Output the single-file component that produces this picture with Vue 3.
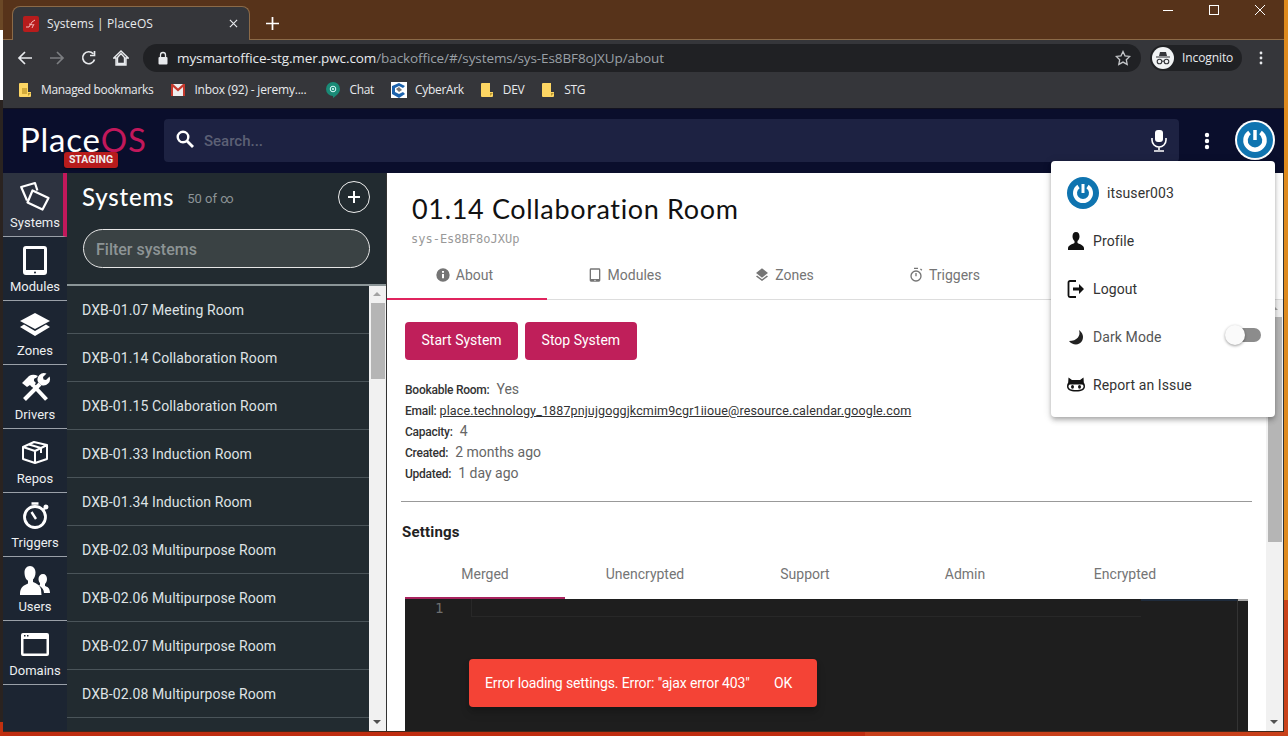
<script setup>
const bookmarks = [
  { label: 'Managed bookmarks', kind: 'managed' },
  { label: 'Inbox (92) - jeremy....', kind: 'gmail' },
  { label: 'Chat', kind: 'chat' },
  { label: 'CyberArk', kind: 'cyber' },
  { label: 'DEV', kind: 'folder' },
  { label: 'STG', kind: 'folder' }
]

const nav = [
  { label: 'Systems', active: true, paths: [
    { d: 'M8 20.500 2.200 7 16 3l2.400 7.500', fill: 'none', stroke: '#fff', 'stroke-width': 2.200, 'stroke-linejoin': 'round' },
    { d: 'M13.500 10.500 29.500 18l-6 11.500L8.500 22.500z', fill: 'none', stroke: '#fff', 'stroke-width': 2.200, 'stroke-linejoin': 'round' }
  ] },
  { label: 'Modules', paths: [
    { d: 'M7 2h18a3 3 0 0 1 3 3v23a3 3 0 0 1-3 3H7a3 3 0 0 1-3-3V5a3 3 0 0 1 3-3zM7 5v21h18V5zM16 27.500a1 1 0 1 0 0 2 1 1 0 0 0 0-2z', fill: '#fff', 'fill-rule': 'evenodd' }
  ] },
  { label: 'Zones', paths: [
    { d: 'M16 5l15 8-15 8-15-8z', fill: '#fff' },
    { d: 'M5 16.500 16 23l11-6.500 4 2.500-15 9-15-9z', fill: '#fff' }
  ] },
  { label: 'Drivers', paths: [
    { d: 'M27.500 27.500 13 12', fill: 'none', stroke: '#fff', 'stroke-width': 4 },
    { d: 'M3 11l7-7q4-2.500 9 0l-2 2q-2.500 0-2 3l2 2-4 4-2-2-3 2z', fill: '#fff' },
    { d: 'M5.500 27.500 21 12', fill: 'none', stroke: '#fff', 'stroke-width': 4 },
    { d: 'M30.500 4.500 27 8l-2.500-.5L24 5l3.500-3.500A6.500 6.500 0 0 0 19 10l3 3a6.500 6.500 0 0 0 8.500-8.500z', fill: '#fff' }
  ] },
  { label: 'Repos', paths: [
    { d: 'M4 11l11-5 13 3v14l-12 4-12-4zM4 11l12 4 12-6M16 15v12', fill: 'none', stroke: '#fff', 'stroke-width': 2, 'stroke-linejoin': 'round' },
    { d: 'M10 8.500 22 12v5', fill: 'none', stroke: '#fff', 'stroke-width': 2 }
  ] },
  { label: 'Triggers', paths: [
    { d: 'M16 6.500a10.500 10.500 0 1 0 0 21 10.500 10.500 0 0 0 0-21z', fill: 'none', stroke: '#fff', 'stroke-width': 2.800 },
    { d: 'M12.500 3.500h7M12.500 12l4.500 7', fill: 'none', stroke: '#fff', 'stroke-width': 2.400 },
    { d: 'M24 10l3-3', fill: 'none', stroke: '#fff', 'stroke-width': 2 },
    { d: 'M27 4.500a2.500 2.500 0 1 0 0 5 2.500 2.500 0 0 0 0-5z', fill: '#fff' }
  ] },
  { label: 'Users', paths: [
    { d: 'M11 2c3.500 0 5.500 3 5.500 6.500 0 3-1 5.500-2.500 7v2.500c3 1.500 7 2.500 8 7.500l.5 5.500H1c0-5 1-8 5-10l3-1.500v-3C7 16 5.500 12 5.500 8.500 5.500 5 7.500 2 11 2z', fill: '#fff' },
    { d: 'M24 10c2.500 0 4 2 4 5 0 2-1 4-2 5v2c2 .8 5 1.500 5 7h-6c0-3-2-6-5-7.500 1-.5 1-1 1-1.500v-1c-1-1-1.500-2.500-1.500-4 0-3 2-5 4.500-5z', fill: '#fff' }
  ] },
  { label: 'Domains', paths: [
    { d: 'M4 5h24a2 2 0 0 1 2 2v19a2 2 0 0 1-2 2H4a2 2 0 0 1-2-2V7a2 2 0 0 1 2-2zM4.500 11v14.500h23V11zM5 7h1.500v1.500H5zM8 7h1.500v1.500H8z', fill: '#fff', 'fill-rule': 'evenodd' }
  ] }
]

const systems = [
  'DXB-01.07 Meeting Room',
  'DXB-01.14 Collaboration Room',
  'DXB-01.15 Collaboration Room',
  'DXB-01.33 Induction Room',
  'DXB-01.34 Induction Room',
  'DXB-02.03 Multipurpose Room',
  'DXB-02.06 Multipurpose Room',
  'DXB-02.07 Multipurpose Room',
  'DXB-02.08 Multipurpose Room'
]

const tabs = [
  { label: 'About', active: true, d: 'M12 2a10 10 0 1 0 0 20 10 10 0 0 0 0-20zm1.500 15h-3v-6.500h3zm0-8.500h-3V6h3z' },
  { label: 'Modules', d: 'M6 2h12a2 2 0 0 1 2 2v16a2 2 0 0 1-2 2H6a2 2 0 0 1-2-2V4a2 2 0 0 1 2-2zm0 2v14h12V4zm6 15a1 1 0 1 0 0 2 1 1 0 0 0 0-2z' },
  { label: 'Zones', d: 'M11.990 18.540l-7.370-5.730L3 14.070l9 7 9-7-1.630-1.270-7.380 5.740zM12 16l7.360-5.730L21 9l-9-7-9 7 1.630 1.270L12 16z' },
  { label: 'Triggers', d: 'M9 1h6v2H9zM12 5a8.500 8.500 0 1 0 0 17 8.500 8.500 0 0 0 0-17zm0 2a6.500 6.500 0 1 1 0 13 6.500 6.500 0 0 1 0-13zm-1 2h2v5h-2zM18 3.500l1.400-1.400 2 2L20 5.500z' }
]

const details = [
  { k: 'Bookable Room:', v: 'Yes' },
  { k: 'Email:', v: 'place.technology_1887pnjujgoggjkcmim9cgr1iioue@resource.calendar.google.com', link: true },
  { k: 'Capacity:', v: '4' },
  { k: 'Created:', v: '2 months ago' },
  { k: 'Updated:', v: '1 day ago' }
]

const settingTabs = ['Merged', 'Unencrypted', 'Support', 'Admin', 'Encrypted']
</script>

<template>
  <div class="desktop">
    <div class="window">
      <div class="titlebar">
        <div class="tab">
          <svg class="favicon" viewBox="0 0 16 16">
            <rect width="16" height="16" rx="2" fill="#b71c1c" />
            <path d="M3 11h3l3-5 3-2M6 8l4 1M9 12l2-4" fill="none" stroke="#f4b8b8" stroke-width="1" />
          </svg>
          <span class="tab-title">Systems | PlaceOS</span>
          <svg class="tab-close" viewBox="0 0 10 10"><path d="M1 1l8 8M9 1l-8 8" stroke="#e8eaed" stroke-width="1.300" /></svg>
        </div>
        <svg class="new-tab" viewBox="0 0 12 12"><path d="M6 0v12M0 6h12" stroke="#fff" stroke-width="1.600" /></svg>
        <div class="win-controls">
          <svg viewBox="0 0 10 10"><path d="M0 5.500h10" stroke="#fff" /></svg>
          <svg viewBox="0 0 10 10"><rect x=".5" y=".5" width="9" height="9" fill="none" stroke="#fff" /></svg>
          <svg viewBox="0 0 10 10"><path d="M0 0l10 10M10 0L0 10" stroke="#fff" /></svg>
        </div>
      </div>

      <div class="toolbar">
        <button class="tool"><svg viewBox="0 0 16 16"><path d="M15 8H2M8 2L2 8l6 6" fill="none" stroke="#e8eaed" stroke-width="1.700" /></svg></button>
        <button class="tool"><svg viewBox="0 0 16 16"><path d="M1 8h13M8 2l6 6-6 6" fill="none" stroke="#7c7e81" stroke-width="1.700" /></svg></button>
        <button class="tool"><svg viewBox="0 0 16 16"><path d="M13.500 9.500A6 6 0 1 1 12.200 3.700M13.500 1v4.500H9" fill="none" stroke="#e8eaed" stroke-width="1.700" /></svg></button>
        <button class="tool"><svg viewBox="0 0 16 16"><path d="M8 1L.8 8H3v7h10V8h2.200zM4.500 7.500 8 3.500l3.500 4v6h-7z" fill="none" stroke="#e8eaed" stroke-width="1.400" /></svg></button>
        <div class="omnibox">
          <svg class="lock" viewBox="0 0 12 14"><path d="M3.500 6V4a2.500 2.500 0 0 1 5 0v2" fill="none" stroke="#e8eaed" stroke-width="1.300" /><rect x="1.500" y="6" width="9" height="7.500" rx="1" fill="#e8eaed" /></svg>
          <span class="url"><span class="host">mysmartoffice-stg.mer.pwc.com</span>/backoffice/#/systems/sys-Es8BF8oJXUp/about</span>
          <svg class="star" viewBox="0 0 16 16"><path d="M8 1.500l2 4.300 4.700.6-3.400 3.300.9 4.700L8 12.100l-4.200 2.300.9-4.700L1.300 6.400 6 5.800z" fill="none" stroke="#c4c6c9" stroke-width="1.300" /></svg>
        </div>
        <div class="incognito">
          <svg class="incog-icon" viewBox="0 0 22 22">
            <circle cx="11" cy="11" r="11" fill="#f1f3f4" />
            <path d="M8 5h6l1 4H7zM4 9.500h14v1H4z" fill="#35363a" />
            <circle cx="7.500" cy="14.500" r="2.300" fill="none" stroke="#35363a" stroke-width="1.100" />
            <circle cx="14.500" cy="14.500" r="2.300" fill="none" stroke="#35363a" stroke-width="1.100" />
            <path d="M9.800 14.200h2.400" stroke="#35363a" />
          </svg>
          <span>Incognito</span>
        </div>
        <svg class="chrome-dots" viewBox="0 0 4 14"><circle cx="2" cy="2" r="1.400" fill="#e8eaed" /><circle cx="2" cy="7" r="1.400" fill="#e8eaed" /><circle cx="2" cy="12" r="1.400" fill="#e8eaed" /></svg>
      </div>

      <div class="bookmarks">
        <div v-for="b in bookmarks" :key="b.label" class="bookmark" :class="b.kind">
          <svg v-if="b.kind === 'managed' || b.kind === 'folder'" class="bm-folder" viewBox="0 0 12 14">
            <path d="M0 1q0-1 1-1h7v10l1.500 0 2.500 0v3q0 1-1 1H1q-1 0-1-1z" fill="#fdd663" />
            <path d="M8 0l1 0v9h3v1H8z" fill="#fdd663" />
            <path d="M9 10h3l-3 3z" fill="#b8962f" />
            <path v-if="b.kind === 'managed'" d="M3 5h5v6H3z" fill="#d3ab3b" />
          </svg>
          <svg v-else-if="b.kind === 'gmail'" class="bm-icon gm" viewBox="0 0 14 12">
            <rect width="14" height="12" fill="#eee" />
            <path d="M0 0h2l5 4.500L12 0h2v12h-2V3L7 7.500 2 3v9H0z" fill="#c5392d" />
          </svg>
          <svg v-else-if="b.kind === 'chat'" class="bm-icon" viewBox="0 0 14 16">
            <path d="M7 0a7 7 0 0 1 7 7c0 4-4 7-7 9v-2A7 7 0 0 1 7 0z" fill="#1a8a76" />
            <circle cx="7" cy="7" r="2.800" fill="none" stroke="#dff" stroke-width="1" />
            <circle cx="7" cy="7" r="1" fill="#dff" />
          </svg>
          <svg v-else class="bm-icon cy" viewBox="0 0 16 16">
            <rect width="16" height="16" fill="#fff" />
            <path d="M8 1l6 3-2 2-4-2-4 2v4l4 2 4-2 2 2-6 4-7-4V4z" fill="#1d63ad" />
            <path d="M5 7l3-2 3 3-3 2z" fill="#777" />
          </svg>
          <span>{{ b.label }}</span>
        </div>
      </div>

      <header class="app-header">
        <div class="logo">
          <span class="logo-text">Place<em>OS</em></span>
          <span class="badge">STAGING</span>
        </div>
        <div class="search">
          <svg class="search-icon" viewBox="0 0 18 18"><circle cx="7" cy="7" r="5.300" fill="none" stroke="#fff" stroke-width="2.400" /><path d="M11 11l6 6" stroke="#fff" stroke-width="2.800" /></svg>
          <span class="search-ph">Search...</span>
          <svg class="mic" viewBox="0 0 16 22">
            <rect x="4" y="0" width="8" height="12" rx="3" fill="#fff" />
            <path d="M1 8v2a7 7 0 0 0 14 0V8M8 17v3M3 21h10" fill="none" stroke="#fff" stroke-width="1.600" />
          </svg>
        </div>
        <svg class="app-dots" viewBox="0 0 6 18"><circle cx="3" cy="3" r="2.200" fill="#fff" /><circle cx="3" cy="9" r="2.200" fill="#fff" /><circle cx="3" cy="15" r="2.200" fill="#fff" /></svg>
        <svg class="avatar-big" viewBox="0 0 40 40">
          <circle cx="20" cy="20" r="20" fill="#fff" />
          <circle cx="20" cy="20" r="18" fill="#0f74b0" />
          <path d="M14.500 12.500a9.500 9.500 0 1 0 11 0" fill="none" stroke="#fff" stroke-width="4.500" />
          <path d="M20 10v10" stroke="#fff" stroke-width="3.500" />
        </svg>
      </header>

      <div class="body">
        <nav class="sidebar">
          <a v-for="n in nav" :key="n.label" class="nav-item" :class="{ active: n.active }">
            <svg class="nav-icon" viewBox="0 0 32 32"><path v-for="(p, i) in n.paths" :key="i" v-bind="p" /></svg>
            <span>{{ n.label }}</span>
          </a>
        </nav>

        <aside class="panel">
          <div class="panel-head">
            <div class="panel-title-row">
              <span class="panel-title">Systems</span>
              <span class="panel-count">50 of ∞</span>
              <span class="add-btn"><svg viewBox="0 0 12 12"><path d="M6 0v12M0 6h12" stroke="#fff" stroke-width="2" /></svg></span>
            </div>
            <div class="filter">Filter systems</div>
          </div>
          <div class="list-wrap">
            <div class="list">
              <div v-for="s in systems" :key="s" class="list-row">{{ s }}</div>
            </div>
            <div class="scrollbar">
              <i class="arrow up"></i>
              <i class="thumb side-thumb"></i>
              <i class="arrow down"></i>
            </div>
          </div>
        </aside>

        <main class="main">
          <div class="main-head">
            <h1>01.14 Collaboration Room</h1>
            <div class="sys-id">sys-Es8BF8oJXUp</div>
            <div class="tabs">
              <div v-for="t in tabs" :key="t.label" class="m-tab" :class="{ active: t.active }">
                <svg viewBox="0 0 24 24"><path :d="t.d" fill="#757575" fill-rule="evenodd" /></svg>
                <span>{{ t.label }}</span>
              </div>
            </div>
          </div>
          <div class="main-row">
            <div class="content">
              <div class="buttons">
                <button class="btn">Start System</button>
                <button class="btn">Stop System</button>
              </div>
              <div class="details">
                <div v-for="d in details" :key="d.k" class="detail">
                  <span class="key">{{ d.k }}</span>
                  <a v-if="d.link" class="val link">{{ d.v }}</a>
                  <span v-else class="val">{{ d.v }}</span>
                </div>
              </div>
              <hr class="rule" />
              <div class="settings">Settings</div>
              <div class="set-tabs">
                <div v-for="(s, i) in settingTabs" :key="s" class="set-tab" :class="{ active: i === 0 }">{{ s }}</div>
              </div>
              <div class="editor">
                <div class="gutter">1</div>
                <div class="code"><div class="cur-line"></div></div>
                <div class="minimap"><i class="mini-top"></i></div>
                <div class="ed-scroll"><i class="ed-top"></i></div>
              </div>
            </div>
            <div class="scrollbar main-scroll">
              <i class="arrow up"></i>
              <i class="thumb main-thumb"></i>
              <i class="arrow down"></i>
            </div>
          </div>
        </main>
      </div>

      <div class="menu">
        <div class="menu-user">
          <svg class="avatar-small" viewBox="0 0 32 32">
            <circle cx="16" cy="16" r="16" fill="#0f74b0" />
            <path d="M11.500 9.500a8 8 0 1 0 9 0" fill="none" stroke="#fff" stroke-width="4" />
            <path d="M16 7v9" stroke="#fff" stroke-width="3" />
          </svg>
          <span>itsuser003</span>
        </div>
        <div class="menu-item">
          <svg viewBox="0 0 18 18"><path d="M9 0c2.500 0 3.500 2 3.500 4.500 0 2-1 3.700-2 4.500v2c1 1 6 1.500 6.500 5v2H1v-2c.5-3.500 5.500-4 6.500-5V9c-1-.8-2-2.500-2-4.500C5.500 2 6.500 0 9 0z" fill="#111" /></svg>
          <span>Profile</span>
        </div>
        <div class="menu-item">
          <svg viewBox="0 0 18 18"><path d="M9 1H3a1.500 1.500 0 0 0-1.500 1.500v13A1.500 1.500 0 0 0 3 17h6" fill="none" stroke="#111" stroke-width="1.800" /><path d="M6 7.500h6V4l5 5-5 5v-3.500H6z" fill="#111" /></svg>
          <span>Logout</span>
        </div>
        <div class="menu-item muted">
          <svg viewBox="0 0 18 18"><path d="M12 2c2 6-2 11-10 11 3 4 10 5 13 0 2-4 1-8-3-11z" fill="#222" /></svg>
          <span>Dark Mode</span>
          <span class="toggle"><i></i></span>
        </div>
        <div class="menu-item">
          <svg viewBox="0 0 18 18"><path d="M1.500 1.500 5 4h8l3.500-2.500.3 5c.8 1 1.200 2.300 1.200 3.500 0 4-3 5.500-9 5.500S0 14 0 10c0-1.200.4-2.500 1.200-3.500z" fill="#111" /><path d="M3 8.500h12c1 0 1.500 1 1.500 2 0 2.500-3 3.500-7.500 3.500s-7.500-1-7.500-3.500c0-1 .5-2 1.500-2z" fill="#fff" /><ellipse cx="5.500" cy="10.800" rx="1.500" ry="1.900" fill="#111" /><ellipse cx="12.500" cy="10.800" rx="1.500" ry="1.900" fill="#111" /></svg>
          <span>Report an Issue</span>
        </div>
      </div>

      <div class="snackbar">
        <span>Error loading settings. Error: "ajax error 403"</span>
        <span class="snack-ok">OK</span>
      </div>
    </div>
  </div>
</template>

<style scoped>
.desktop {
  width: 1288px;
  height: 736px;
  overflow: hidden;
  box-sizing: border-box;
  padding: 0 4px 4px 3px;
  background-color: #c0300f;
  background-image:
    linear-gradient(to bottom, #de8a1e 0, #de8a1e 600px, #c9421a 600px),
    linear-gradient(to bottom, #6b4826 0, #6b4826 30px, #fff 30px, #fff 100px, #2a2320 100px, #2a2320 722px, #c0300f 722px),
    linear-gradient(to right, #bf2d10 0, #bf2d10 865px, #c8401a 865px);
  background-size: 4px 100%, 3px 100%, 100% 4px;
  background-position: right top, left top, left bottom;
  background-repeat: no-repeat;
}

.window {
  position: relative;
  width: 1281px;
  height: 732px;
  box-sizing: border-box;
  border-bottom: 1px solid #43281a;
  display: flex;
  flex-direction: column;
  font-family: Roboto, sans-serif;
  overflow: hidden;
  background: #222;
}

.titlebar {
  height: 40px;
  flex: none;
  box-sizing: border-box;
  padding: 6px 0 0 9px;
  background: #57331a;
  box-shadow: inset 0 -1px 0 #8b6a48;
  display: flex;
  align-items: flex-start;
}
.tab {
  width: 238px;
  height: 34px;
  box-sizing: border-box;
  background: #35363a;
  border: 1px solid #8b6a48;
  border-bottom: 0;
  border-radius: 8px 8px 0 0;
  display: flex;
  align-items: center;
  padding: 0 10px 0 10px;
  color: #e8eaed;
}
.favicon { width: 16px; height: 16px; flex: none; }
.tab-title {
  margin-left: 8px;
  font: 12px/16px "Open Sans", sans-serif;
  flex: 1;
  letter-spacing: 0.1px;
}
.tab-close { width: 9px; height: 9px; margin-right: 1px; }
.new-tab { width: 13px; height: 13px; margin: 11px 0 0 16px; }
.win-controls {
  margin-left: auto;
  margin-top: -1px;
  display: flex;
  gap: 36px;
  padding-right: 19px;
}
.win-controls svg { width: 10px; height: 10px; display: block; }

.toolbar {
  height: 36px;
  flex: none;
  background: #35363a;
  display: flex;
  align-items: center;
  padding-left: 6px;
}
.tool {
  width: 32px;
  height: 32px;
  padding: 0;
  border: 0;
  background: none;
  display: flex;
  align-items: center;
  justify-content: center;
}
.tool svg { width: 16px; height: 16px; }
.omnibox {
  width: 998px;
  height: 28px;
  margin-left: 6px;
  background: #202124;
  border-radius: 14px;
  display: flex;
  align-items: center;
  padding: 0 10px 0 14px;
  box-sizing: border-box;
}
.lock { width: 12px; height: 14px; flex: none; }
.url {
  margin-left: 8px;
  font: 13.500px/18px "Open Sans", sans-serif;
  color: #9aa0a6;
  flex: 1;
  letter-spacing: -0.1px;
}
.host { color: #e8eaed; }
.star { width: 16px; height: 16px; }
.incognito {
  margin-left: 9px;
  width: 92px;
  height: 26px;
  box-sizing: border-box;
  border-radius: 13px;
  background: #202124;
  display: flex;
  align-items: center;
  padding-left: 2px;
  color: #e8eaed;
  font: 12px/16px "Open Sans", sans-serif;
  letter-spacing: -0.1px;
}
.incog-icon { width: 22px; height: 22px; margin-right: 8px; flex: none; }
.chrome-dots { width: 4px; height: 14px; margin-left: 17px; }

.bookmarks {
  height: 32px;
  flex: none;
  box-sizing: border-box;
  background: #35363a;
  display: flex;
  align-items: center;
  padding: 0 0 4px 16px;
  gap: 17px;
  color: #e8eaed;
  font: 12px/16px "Open Sans", sans-serif;
  letter-spacing: -0.33px;
}
.bookmark { display: flex; align-items: center; gap: 9px; }
.bookmark.managed, .bookmark.folder { gap: 10px; }
.bookmark.gmail { margin-left: 1px; letter-spacing: -0.2px; }
.bookmark.chat { margin-left: 2px; gap: 10px; }
.bookmark.cyber { margin-left: 0; }
.bookmark.folder:last-child { margin-left: 1px; }
.bm-folder { width: 12px; height: 14px; }
.bm-icon { width: 14px; height: 16px; }
.bm-icon.gm { height: 12px; }
.bm-icon.cy { width: 16px; height: 16px; margin-right: -1px; }

.app-header {
  height: 65px;
  flex: none;
  box-sizing: border-box;
  background: #0a0e2c;
  border-top: 1px solid #13131f;
  display: flex;
  align-items: center;
}
.logo {
  position: relative;
  width: 161px;
  height: 64px;
  flex: none;
}
.logo-text {
  position: absolute;
  left: 17px;
  top: 19px;
  font: 400 33px/22px Lato, sans-serif;
  letter-spacing: .8px;
  color: #fff;
  white-space: nowrap;
}
.logo-text em { font-style: normal; color: #c2185b; }
.badge {
  position: absolute;
  left: 61px;
  top: 43px;
  width: 54px;
  height: 16px;
  background: #b71c1c;
  border-radius: 3px;
  color: #eee;
  font: 700 10.500px/16px Roboto, sans-serif;
  text-align: center;
  box-shadow: 0 1px 2px rgba(0, 0, 0, .5);
}
.search {
  width: 1015px;
  height: 43px;
  flex: none;
  margin-top: -1px;
  background: #1d2242;
  border-radius: 4px;
  display: flex;
  align-items: center;
  padding: 0 12px;
  box-sizing: border-box;
}
.search-icon { width: 18px; height: 18px; flex: none; margin-top: -4px; }
.search-ph { margin-left: 10px; font-size: 15px; color: #5c6075; flex: 1; font-weight: 500; }
.mic { width: 16px; height: 22px; margin-right: 0; margin-left: 0; }
.app-dots { width: 6px; height: 18px; margin-left: 25px; }
.avatar-big { width: 40px; height: 40px; margin-left: 25px; margin-top: -3px; flex: none; }

.body { flex: 1; min-height: 0; display: flex; }

.sidebar { width: 64px; flex: none; background: #1c2532; }
.nav-item {
  height: 64px;
  box-sizing: border-box;
  border-bottom: 1px solid #9aa0a8;
  display: flex;
  flex-direction: column;
  align-items: center;
  padding-top: 7px;
  color: #eceff1;
  font-size: 13px;
  line-height: 16px;
}
.nav-item.active {
  background: #2d3340;
  border-right: 4px solid #c2185b;
  padding-left: 4px;
}
.nav-icon { width: 32px; height: 32px; flex: none; margin-bottom: 3px; }

.panel {
  width: 320px;
  flex: none;
  box-sizing: border-box;
  background: #222b30;
  border-right: 1px solid #333;
  display: flex;
  flex-direction: column;
  min-height: 0;
}
.panel-head {
  height: 113px;
  flex: none;
  box-sizing: border-box;
  border-bottom: 2px solid #8b9597;
  padding: 8px 16px 0 16px;
}
.panel-title-row { display: flex; align-items: center; height: 32px; }
.panel-title { margin-left: -1px; color: #fff; font: 500 24px/32px Lato, sans-serif; letter-spacing: .8px; }
.panel-count { margin-left: 13px; color: #8d9497; font-size: 13px; margin-top: 2px; }
.add-btn {
  margin-left: auto;
  width: 32px;
  height: 32px;
  box-sizing: border-box;
  border: 1px solid #eee;
  border-radius: 50%;
  display: flex;
  align-items: center;
  justify-content: center;
}
.add-btn svg { width: 12px; height: 12px; }
.filter {
  margin-top: 16px;
  height: 39px;
  box-sizing: border-box;
  background: #3a4244;
  border: 1px solid #e6e6e6;
  border-radius: 20px;
  padding-left: 12px;
  color: #8d9495;
  font-size: 16px;
  font-weight: 500;
  line-height: 39px;
}
.list-wrap { flex: 1; min-height: 0; display: flex; }
.list { flex: 1; min-width: 0; overflow: hidden; }
.list-row {
  height: 48px;
  box-sizing: border-box;
  border-bottom: 1px solid #4a5459;
  padding-left: 15px;
  color: #dfe3e5;
  font-size: 14px;
  line-height: 49px;
  letter-spacing: .1px;
}
.scrollbar {
  position: relative;
  width: 17px;
  flex: none;
  background: #f1f1f1;
}
.thumb { position: absolute; left: 2px; right: 1px; background: #b5b5b5; display: block; }
.side-thumb { top: 17px; height: 76px; }
.arrow { position: absolute; left: 4px; width: 0; height: 0; border-left: 4px solid transparent; border-right: 4px solid transparent; }
.arrow.up { top: 6px; border-bottom: 4px solid #a3a3a3; }
.arrow.down { bottom: 7px; border-top: 4px solid #505050; }

.main { flex: 1; min-width: 0; background: #fff; display: flex; flex-direction: column; border-right: 1px solid #333; }
.main-head { flex: none; }
.main-head h1 {
  margin: 0;
  padding: 18px 0 0 25px;
  font: 400 27px/36px Lato, sans-serif;
  color: #111;
  letter-spacing: .66px;
}
.sys-id {
  margin-top: 4px;
  padding-left: 24px;
  font: 12px/16px "DejaVu Sans Mono", monospace;
  color: #999;
}
.tabs {
  margin-top: 5px;
  height: 48px;
  box-sizing: border-box;
  border-bottom: 1px solid #ddd;
  display: flex;
}
.m-tab {
  width: 160px;
  height: 48px;
  box-sizing: border-box;
  display: flex;
  align-items: center;
  justify-content: center;
  gap: 5px;
  color: #757575;
  font-size: 14px;
  font-weight: 400;
  padding: 0 6px 2px 0;
}
.m-tab svg { width: 16px; height: 16px; }
.m-tab.active { border-bottom: 2px solid #e0245e; padding-bottom: 0; }

.main-row { flex: 1; min-height: 0; display: flex; }
.content {
  flex: 1;
  min-width: 0;
  box-sizing: border-box;
  padding: 22px 18px 0;
  display: flex;
  flex-direction: column;
}
.buttons { display: flex; gap: 7px; flex: none; }
.btn {
  height: 38px;
  padding: 0 16.500px 2px;
  border: 0;
  border-radius: 4px;
  background: #bf1f5a;
  color: #fff;
  font: 400 14px Roboto, sans-serif;
}
.details { margin-top: 19px; flex: none; }
.detail { height: 21px; line-height: 21px; display: flex; align-items: baseline; }
.key { font-size: 12px; font-weight: 500; color: #333; margin-right: 7px; letter-spacing: -0.25px; }
.val { font-size: 14px; color: #666; }
.val.link { font-size: 12.500px; color: #333; text-decoration: underline; margin-left: -4px; letter-spacing: .13px; }
.rule { margin: 17px -4px 0; height: 1px; border: 0; background: #999; flex: none; }
.settings { margin: 20px 0 0 -3px; font-size: 15px; font-weight: 700; line-height: 20px; color: #222; flex: none; letter-spacing: .2px; }
.set-tabs { margin-top: 8px; height: 49px; display: flex; flex: none; }
.set-tab {
  width: 160px;
  height: 48px;
  box-sizing: border-box;
  text-align: center;
  color: #757575;
  font-size: 14px;
  font-weight: 400;
  line-height: 48px;
}
.set-tab.active { border-bottom: 2px solid #a8235e; height: 49px; }
.editor { flex: 1; min-height: 0; background: #1e1e1e; display: flex; }
.gutter { width: 66px; box-sizing: border-box; padding: 0 0 0 30px; color: #6e6e6e; font: 14px/18px "DejaVu Sans Mono", monospace; flex: none; }
.code { width: 670px; flex: none; }
.cur-line { height: 18px; box-sizing: border-box; border: 1px solid #282828; border-top: 0; border-right: 0; }
.minimap { width: 97px; position: relative; flex: none; border-right: 1px solid #333; box-sizing: border-box; }
.mini-top { display: block; height: 2px; background: #1f2c3d; }
.ed-scroll { flex: 1; }
.ed-top { display: block; height: 2px; background: #aaa; }
.main-thumb { top: 17px; height: 225px; }

.menu {
  position: absolute;
  left: 1048px;
  top: 161px;
  width: 224px;
  height: 256px;
  background: #fff;
  border-radius: 4px;
  box-shadow: 0 2px 4px -1px rgba(0, 0, 0, .2), 0 4px 5px rgba(0, 0, 0, .14), 0 1px 10px rgba(0, 0, 0, .12);
  box-sizing: border-box;
  padding: 8px 0;
}
.menu-user { height: 48px; display: flex; align-items: center; padding-left: 16px; font-size: 14px; color: #333; letter-spacing: .1px; }
.avatar-small { width: 32px; height: 32px; margin-right: 8px; flex: none; }
.menu-item { height: 48px; display: flex; align-items: center; padding-left: 16px; font-size: 14px; color: #333; position: relative; letter-spacing: .1px; }
.menu-item svg { width: 18px; height: 18px; margin-right: 8px; flex: none; }
.menu-item.muted { color: #555; }
.toggle { position: absolute; left: 176px; top: 15px; width: 34px; height: 14px; background: #8c8c8c; border-radius: 7px; }
.toggle i {
  position: absolute;
  left: -2px;
  top: -3px;
  width: 20px;
  height: 20px;
  border-radius: 50%;
  background: #fafafa;
  box-shadow: 0 1px 3px rgba(0, 0, 0, .4);
}

.snackbar {
  position: absolute;
  left: 466px;
  top: 659px;
  width: 348px;
  height: 48px;
  box-sizing: border-box;
  background: #f44336;
  border-radius: 4px;
  box-shadow: 0 3px 5px -1px rgba(0, 0, 0, .2), 0 6px 10px rgba(0, 0, 0, .14);
  display: flex;
  align-items: center;
  padding-left: 16px;
  color: #fff;
  font-size: 14px;
  letter-spacing: -0.14px;
}
.snack-ok { position: absolute; left: 305px; font-weight: 400; }
</style>
